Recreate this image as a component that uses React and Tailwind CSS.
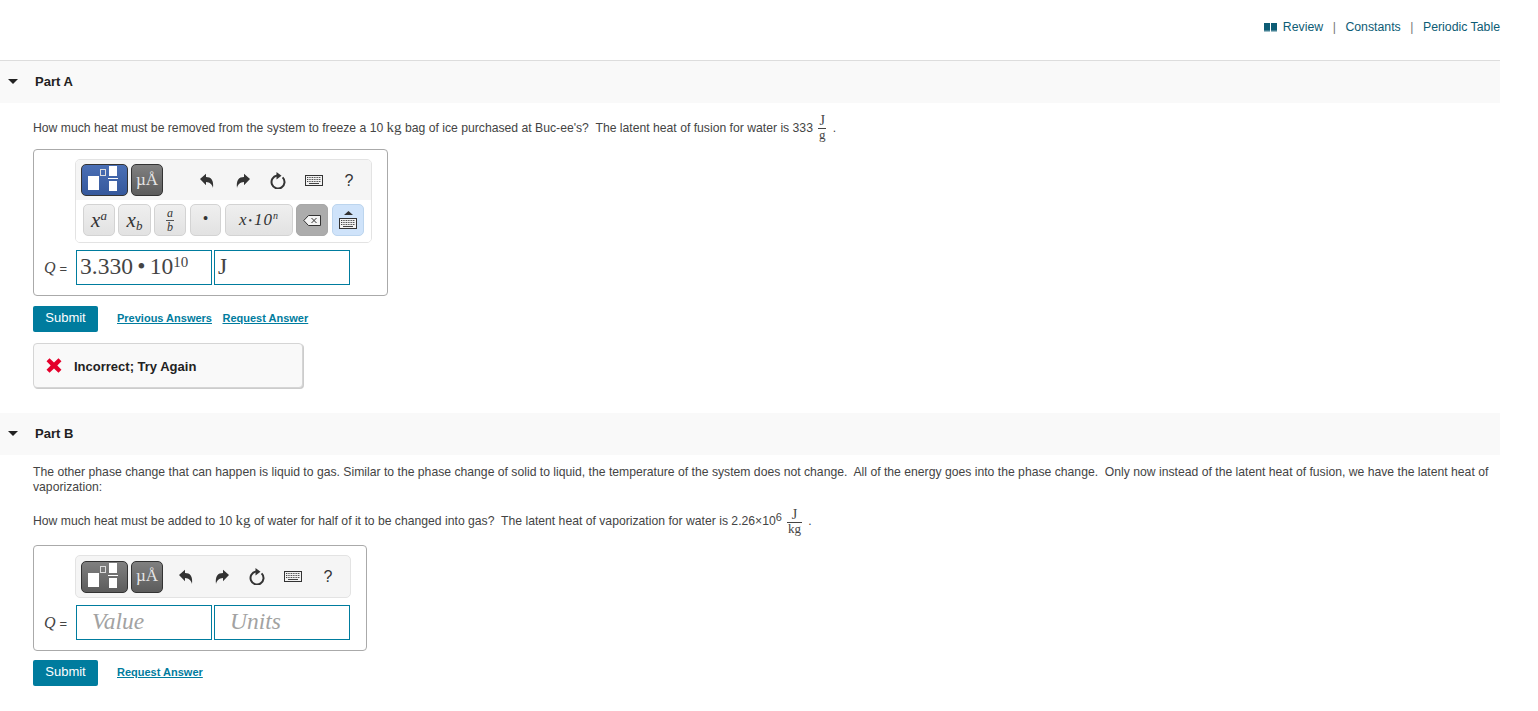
import React from 'react';

const sans = { fontFamily: '"Liberation Sans", Arial, sans-serif' };

function Fraction({ top, bottom, className }) {
  return (
    <span className={"relative inline-flex flex-col items-center align-middle ml-[5px] mr-[3px] font-['Liberation_Serif',serif] text-[13px] leading-[13px] text-[#444] " + className}>
      <span className="px-[1px] pb-[1px] text-[14px]">{top}</span>
      <span className="border-t border-[#444] px-[1px] w-full text-center leading-[12px]">{bottom}</span>
    </span>
  );
}

function Kg({ children }) {
  return <span className="font-['Liberation_Serif',serif] text-[15px]">{children}</span>;
}

function BookIcon() {
  return (
    <svg width="13" height="9" viewBox="0 0 13 9" className="mr-[6px]">
      <path d="M0 0h6v8.200H0zM7 0h6v8.200H7z" fill="#0d5c75" />
      <path d="M0 8h6M7 8h6" stroke="#7aa5b3" strokeWidth="1" />
    </svg>
  );
}

function Caret() {
  return (
    <svg width="10" height="5" viewBox="0 0 10 5" className="mb-[2px]">
      <path d="M0 0h10L5 5z" fill="#222" />
    </svg>
  );
}

function PartHeader({ label }) {
  return (
    <div className="h-[42px] bg-[#f9f9f9] flex items-center pl-2">
      <Caret />
      <span className="ml-[17px] pb-[2px] text-[13px] font-bold text-[#222]">{label}</span>
    </div>
  );
}

function TemplatesIcon() {
  return (
    <svg width="33" height="25" viewBox="0 0 33 25" className="mb-[3px]">
      <rect x="0" y="10" width="11" height="14" fill="#fff" />
      <rect x="12.500" y="3.500" width="5" height="6" fill="none" stroke="#ddd" strokeWidth="1" />
      <rect x="21" y="0" width="8" height="10" fill="#fff" />
      <rect x="20" y="12" width="10" height="1" fill="#fff" />
      <rect x="21" y="15" width="8" height="10" fill="#fff" />
    </svg>
  );
}

function ToolbarTabs({ blue }) {
  return (
    <>
      <div
        className={
          'w-[47px] h-[32px] rounded-[5px] border border-[#333] flex items-center justify-center bg-gradient-to-b ' +
          (blue ? 'from-[#4a6fb5] to-[#35589c]' : 'from-[#808080] to-[#5c5c5c]')
        }
      >
        <TemplatesIcon />
      </div>
      <div className="ml-[3px] w-[32px] h-[32px] rounded-[5px] border border-[#333] bg-gradient-to-b from-[#808080] to-[#5c5c5c] flex items-center justify-center font-['Liberation_Serif',serif] text-[17px] text-[#e6e6e6] pb-[2px]">
        µÅ
      </div>
    </>
  );
}

function UndoIcon({ flip }) {
  return (
    <svg width="14" height="15" viewBox="0 0 14 15" className={flip ? '-scale-x-100' : ''}>
      <path d="M0 6 6 .8V4c5 0 8 3 7 11C12 11 10 9.500 6 9v3.200z" fill="#333" />
    </svg>
  );
}

function ResetIcon() {
  return (
    <svg width="16" height="17" viewBox="0 0 16 17">
      <path d="M7 3.600A6.500 6.500 0 1 0 12.600 5.400" fill="none" stroke="#333" strokeWidth="2" />
      <path d="M6.500 0v7.500L11.500 3.700z" fill="#333" />
    </svg>
  );
}

function KeyboardIcon() {
  return (
    <svg width="18" height="11" viewBox="0 0 18 11">
      <rect x=".5" y=".5" width="17" height="10" fill="#f2f2f2" stroke="#333" />
      <path d="M2 2.500h14M2 4.500h14M2 6.500h14" stroke="#444" strokeWidth="1" strokeDasharray="1 .7" />
      <path d="M4 8.500h10" stroke="#444" strokeWidth="1" />
    </svg>
  );
}

function ToolIcons({ start }) {
  const items = [<UndoIcon />, <UndoIcon flip />, <ResetIcon />, <KeyboardIcon />];
  return (
    <div className="flex-1 flex items-center gap-[17.500px]" style={{ paddingLeft: start }}>
      {items.map((icon, i) => (
        <span key={i} className="w-[18px] flex justify-center">
          {icon}
        </span>
      ))}
      <span className="w-[18px] text-center text-[16px] text-[#333]">?</span>
    </div>
  );
}

function KeyButton({ className, children }) {
  return (
    <div
      className={
        'h-[32px] rounded-[5px] border border-[#d3d3d3] bg-gradient-to-b from-[#efefef] to-[#e2e2e2] flex items-center justify-center text-[#333] font-["Liberation_Serif",serif] italic ' +
        className
      }
    >
      {children}
    </div>
  );
}

function KeyRow() {
  return (
    <div className="h-[42px] bg-white flex items-start pt-[4px] pl-[7px]">
      <KeyButton className="w-[32px] text-[21px]">
        <span>
          x<sup className="text-[13px] relative -top-[7px] align-baseline">a</sup>
        </span>
      </KeyButton>
      <KeyButton className="w-[33px] ml-[3px] text-[21px]">
        <span>
          x<sub className="text-[13px] relative top-[3px] align-baseline">b</sub>
        </span>
      </KeyButton>
      <KeyButton className="w-[32px] ml-[3px] text-[12px]">
        <span className="flex flex-col items-center leading-[13px]">
          <span className="px-[1px] border-b border-[#555]">a</span>
          <span>b</span>
        </span>
      </KeyButton>
      <KeyButton className="w-[31px] ml-[4px] not-italic text-[16px] pb-1">•</KeyButton>
      <KeyButton className="w-[68px] ml-[4px] text-[17px] tracking-[1px]">
        <span>
          x<span className="text-[10px] relative -top-[1px] not-italic mx-[1px]">•</span>10
          <sup className="text-[10px] relative -top-[6px] align-baseline">n</sup>
        </span>
      </KeyButton>
      <div className="w-[32px] h-[32px] ml-[3px] rounded-[5px] border border-[#a8a8a8] bg-[#acacac] flex items-center justify-center">
        <svg width="18" height="11" viewBox="0 0 18 11">
          <path d="M.8 5.500 5.500.5h12v10h-12z" fill="#f4f4f4" stroke="#333" />
          <path d="m8.500 3 5 5m0-5-5 5" stroke="#333" strokeWidth="1" />
        </svg>
      </div>
      <div className="w-[32px] h-[32px] ml-[4px] rounded-[5px] border border-[#bcd5ee] bg-[#cfe3fa] flex flex-col items-center justify-center gap-[3px]">
        <svg width="9" height="4" viewBox="0 0 9 4">
          <path d="M0 4h9L4.500 0z" fill="#333" />
        </svg>
        <KeyboardIcon />
      </div>
    </div>
  );
}

function MathInput({ children, placeholder }) {
  return (
    <div className="w-[136px] h-[35px] pb-[2px] border border-[#007c9e] flex items-center font-['Liberation_Serif',serif] text-[23.500px] text-[#444] whitespace-nowrap">
      {placeholder ? (
        <span className="italic text-[#a2a2a2] pl-[15px]">{placeholder}</span>
      ) : (
        <span className="pl-[3px] [word-spacing:-1.500px]">{children}</span>
      )}
    </div>
  );
}

function AnswerRow({ children }) {
  return (
    <div className="flex items-center">
      <span className="w-[43px] pl-[11px] flex items-baseline gap-[4px] whitespace-nowrap text-[13px] text-[#444]">
        <span className="font-['Liberation_Serif',serif] italic text-[16px]">Q</span>
        <span>=</span>
      </span>
      <div className="flex gap-[2px]">{children}</div>
    </div>
  );
}

function SubmitRow({ links }) {
  return (
    <div className="flex items-center">
      <button className="w-[65px] h-[26px] pb-[3px] rounded-[2px] bg-[#007c9e] text-white text-[13px]">Submit</button>
      <div className="ml-[19px] pb-[2px] flex gap-[10.500px]">
        {links.map((l) => (
          <a key={l} className="text-[11px] font-bold text-[#007c9e] underline">
            {l}
          </a>
        ))}
      </div>
    </div>
  );
}

export default function App() {
  return (
    <div style={sans} className="w-[1500px] min-h-[711px] bg-white text-[12.200px] text-[#444] leading-[15px]">
      <div className="h-[61px] border-b border-[#ddd] flex justify-end items-center pb-[5px] text-[12.300px] text-[#0d5c75]">
        <BookIcon />
        <span>Review</span>
        <span className="mx-[9.500px] text-[#777]">|</span>
        <span>Constants</span>
        <span className="mx-[9.500px] text-[#777]">|</span>
        <span>Periodic Table</span>
      </div>

      <PartHeader label="Part A" />
      <div className="pl-[33px]">
        <p className="h-[46px] pt-[4px] flex items-center whitespace-pre-wrap">
          <span>
            How much heat must be removed from the system to freeze a 10 <Kg>kg</Kg> bag of ice purchased at Buc-ee's?  The latent heat of fusion for water is 333
            <Fraction top="J" bottom="g" className="-top-[1px]" /> .
          </span>
        </p>
        <div className="w-[355px] h-[147px] border border-[#aaa] rounded-[4px] pl-[41px] pt-[9px]">
          <div className="w-[297px] rounded-[5px] border border-[#e3e3e3] overflow-hidden">
            <div className="h-[40px] bg-[#f5f5f5] flex items-center pl-[5px]">
              <ToolbarTabs blue />
              <ToolIcons start="35px" />
            </div>
            <KeyRow />
          </div>
          <div className="mt-[7px] -ml-[42px]">
            <AnswerRow>
              <MathInput>
                3.330 • 10<sup className="text-[15px] relative top-[2px] align-super leading-[0]">10</sup>
              </MathInput>
              <MathInput>J</MathInput>
            </AnswerRow>
          </div>
        </div>
        <div className="mt-[10px]">
          <SubmitRow links={['Previous Answers', 'Request Answer']} />
        </div>
        <div className="mt-[11px] w-[270px] h-[45px] rounded-[4px] border border-[#d5d5d5] bg-[#f9f9f9] shadow-[1px_1px_0_0_#ccc] flex items-center pl-[12px]">
          <svg width="16" height="15" viewBox="0 0 15 14">
            <path d="m.5 3 2.800-2.800 4.200 3.900L11.700.2 14.500 3l-3.900 4 3.900 4-2.800 2.800-4.200-3.900-4.200 3.900L.5 11l3.900-4z" fill="#e4002b" />
          </svg>
          <span className="ml-[12px] pt-[1px] text-[13px] font-bold text-[#222]">Incorrect; Try Again</span>
        </div>
      </div>

      <div className="mt-[25px]">
        <PartHeader label="Part B" />
      </div>
      <div className="pl-[33px] pr-[8px]">
        <p className="pt-[10px] whitespace-pre-wrap">
          The other phase change that can happen is liquid to gas. Similar to the phase change of solid to liquid, the temperature of the system does not change.  All of the energy goes into the phase change.  Only now instead of the latent heat of fusion, we have the latent heat of vaporization:
        </p>
        <p className="h-[47px] mt-[3px] flex items-center whitespace-pre-wrap">
          <span>
            How much heat must be added to 10 <Kg>kg</Kg> of water for half of it to be changed into gas?  The latent heat of vaporization for water is 2.26×10
            <sup className="text-[11px] relative top-[1px] align-super leading-[0]">6</sup>
            <Fraction top="J" bottom="kg" className="" /> .
          </span>
        </p>
        <div className="w-[334px] h-[106px] border border-[#aaa] rounded-[4px] pl-[41px] pt-[9px]">
          <div className="w-[276px] h-[43px] rounded-[5px] border border-[#e3e3e3] bg-[#f5f5f5] flex items-center pl-[5px]">
            <ToolbarTabs />
            <ToolIcons start="14px" />
          </div>
          <div className="mt-[7px] -ml-[42px]">
            <AnswerRow>
              <MathInput placeholder="Value" />
              <MathInput placeholder="Units" />
            </AnswerRow>
          </div>
        </div>
        <div className="mt-[9px]">
          <SubmitRow links={['Request Answer']} />
        </div>
      </div>
    </div>
  );
}
